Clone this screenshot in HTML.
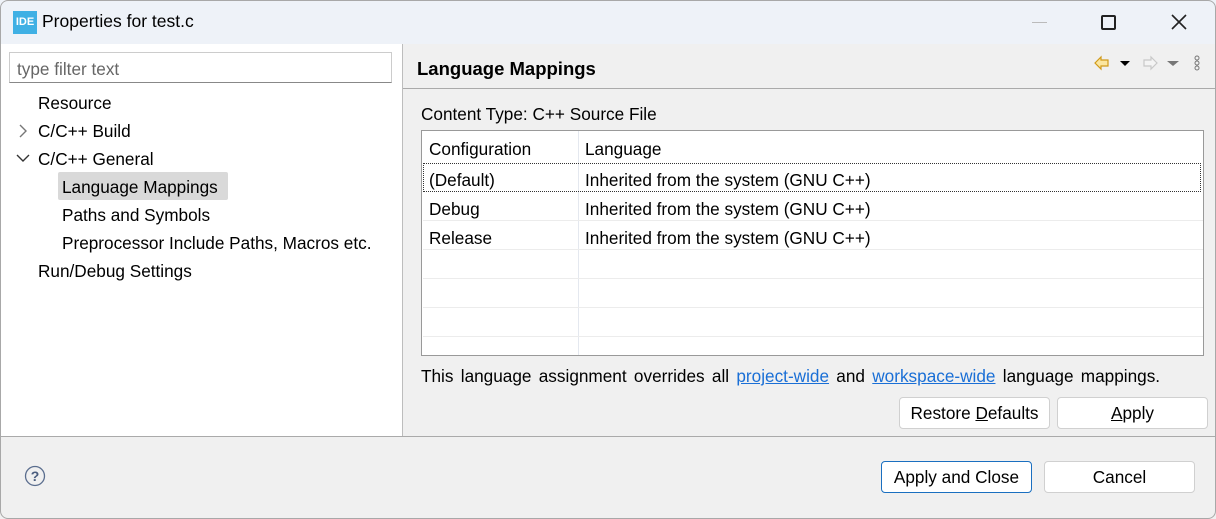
<!DOCTYPE html>
<html><head><style>
*{margin:0;padding:0;box-sizing:border-box}
body{width:1216px;height:519px;background:#fff;font-family:"Liberation Sans",sans-serif;font-size:17.2px;color:#000;position:relative;overflow:hidden}
.a{position:absolute;white-space:nowrap}
.win{position:absolute;left:0;top:0;width:1216px;height:519px;overflow:hidden;background:#fff}
.frame{position:absolute;left:0;top:0;width:1216px;height:519px;border:1px solid #a8a8a8;border-radius:8px}
.btn{position:absolute;height:32px;border:1px solid #d0d0d0;border-radius:4px;background:#fff;text-align:center;line-height:30px}
.row{position:absolute;left:1px;width:780px;height:29px;border-bottom:1px solid #ececec}
</style></head><body>
<div class="win">
<div class="a" style="left:0;top:0;width:1216px;height:44px;background:#eef2f8"></div>
<div class="a" style="left:13px;top:11px;width:24px;height:23px;background:#3fb0e4;color:#fff;font-size:11px;font-weight:bold;line-height:23px;text-align:center">IDE</div>
<div class="a" style="left:42px;top:11px;font-size:17.5px">Properties for test.c</div>
<div class="a" style="left:1032px;top:22px;width:15px;height:1px;background:#bbb"></div>
<div class="a" style="left:1101px;top:15px;width:15px;height:15px;border:2px solid #222;border-radius:2px"></div>
<svg class="a" style="left:1171px;top:14px" width="16" height="16"><path d="M1 1L15 15M15 1L1 15" stroke="#222" stroke-width="1.6"/></svg>

<div class="a" style="left:9px;top:52px;width:383px;height:31px;border:1px solid #ccc;border-bottom:1px solid #888"></div>
<div class="a" style="left:17px;top:59px;color:#666">type filter text</div>
<div class="a" style="left:38px;top:93px">Resource</div>
<svg class="a" style="left:18px;top:124px" width="10" height="14"><path d="M2 1L8 7L2 13" stroke="#777" fill="none" stroke-width="1.4"/></svg>
<div class="a" style="left:38px;top:121px">C/C++ Build</div>
<svg class="a" style="left:16px;top:153px" width="14" height="10"><path d="M1 2L7 8L13 2" stroke="#333" fill="none" stroke-width="1.4"/></svg>
<div class="a" style="left:38px;top:149px">C/C++ General</div>
<div class="a" style="left:58px;top:172px;width:170px;height:28px;background:#d9d9d9;border-radius:2px"></div>
<div class="a" style="left:62px;top:177px">Language Mappings</div>
<div class="a" style="left:62px;top:205px">Paths and Symbols</div>
<div class="a" style="left:62px;top:233px">Preprocessor Include Paths, Macros etc.</div>
<div class="a" style="left:38px;top:261px">Run/Debug Settings</div>

<div class="a" style="left:402px;top:44px;width:1px;height:392px;background:#bdbdbd"></div>
<div class="a" style="left:403px;top:44px;width:813px;height:392px;background:#f0f0f0"></div>
<div class="a" style="left:403px;top:88px;width:813px;height:1px;background:#aaa"></div>
<div class="a" style="left:417px;top:58px;font-size:18.5px;font-weight:bold">Language Mappings</div>
<svg class="a" style="left:1093px;top:55px" width="110" height="16">
<path d="M2 8L8 2V5H15V11H8V14Z" fill="#fbe6a0" stroke="#d09a1a" stroke-width="1.2"/>
<path d="M27 6H37L32 11Z" fill="#000"/>
<path d="M64 8L58 2V5H51V11H58V14Z" fill="#f4f4f4" stroke="#c8c8c8" stroke-width="1.2"/>
<path d="M74 6H86L80 11Z" fill="#777"/>
<circle cx="104" cy="3" r="2" fill="none" stroke="#777"/><circle cx="104" cy="8" r="2" fill="none" stroke="#777"/><circle cx="104" cy="13" r="2" fill="none" stroke="#777"/>
</svg>
<div class="a" style="left:421px;top:104px">Content Type: C++ Source File</div>
<div class="a" style="left:421px;top:130px;width:783px;height:226px;border:1px solid #999;background:#fff;overflow:hidden">
<div class="a" style="left:156px;top:0;width:1px;height:226px;background:#e4e8ef"></div>
<div class="a" style="left:7px;top:8px">Configuration</div>
<div class="a" style="left:163px;top:8px">Language</div>
<div class="row" style="top:32px;border:1px dotted #333;width:778px"></div>
<div class="a" style="left:7px;top:39px">(Default)</div><div class="a" style="left:163px;top:39px">Inherited from the system (GNU C++)</div>
<div class="row" style="top:61px"></div>
<div class="a" style="left:7px;top:68px">Debug</div><div class="a" style="left:163px;top:68px">Inherited from the system (GNU C++)</div>
<div class="row" style="top:90px"></div>
<div class="a" style="left:7px;top:97px">Release</div><div class="a" style="left:163px;top:97px">Inherited from the system (GNU C++)</div>
<div class="row" style="top:119px"></div>
<div class="row" style="top:148px"></div>
<div class="row" style="top:177px"></div>
</div>
<div class="a" style="left:421px;top:366px;word-spacing:2.5px">This language assignment overrides all <span style="color:#1a6fd6;text-decoration:underline">project-wide</span> and <span style="color:#1a6fd6;text-decoration:underline">workspace-wide</span> language mappings.</div>
<div class="btn" style="left:899px;top:397px;width:151px">Restore <u>D</u>efaults</div>
<div class="btn" style="left:1057px;top:397px;width:151px"><u>A</u>pply</div>

<div class="a" style="left:0;top:436px;width:1216px;height:83px;background:#f0f0f0;border-top:1px solid #aaa"></div>
<svg class="a" style="left:24px;top:465px" width="22" height="22"><circle cx="11" cy="11" r="9.5" fill="none" stroke="#5a6d8e" stroke-width="1.3"/><text x="11" y="16" text-anchor="middle" font-family="Liberation Sans" font-weight="bold" font-size="14" fill="#4a5d7e">?</text></svg>
<div class="btn" style="left:881px;top:461px;width:151px;border-color:#1a6fc0">Apply and Close</div>
<div class="btn" style="left:1044px;top:461px;width:151px">Cancel</div>
</div>
<div class="frame"></div>
</body></html>
